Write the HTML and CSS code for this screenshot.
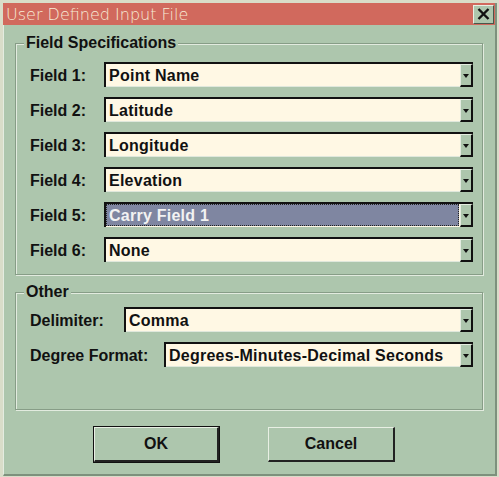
FILE: index.html
```html
<!DOCTYPE html>
<html lang="en">
<head>
<meta charset="UTF-8">
<title>User Defined Input File</title>
<link rel="stylesheet" href="styles.css">
</head>
<body>
<div class="window">
    <div class="titlebar">
        <span class="title">User Defined Input File</span>
        <span class="close">
            <svg width="13" height="12" viewBox="0 0 13 12"><path d="M1.5 1 L11.5 11 M11.5 1 L1.5 11" stroke="#111" stroke-width="2.4" fill="none"/></svg>
        </span>
    </div>
    <div class="content">
        <fieldset class="group group-fields">
            <legend>Field Specifications</legend>
            <div class="row">
                <span class="label">Field 1:</span>
                <div class="combo"><span class="value">Point Name</span><span class="drop"></span></div>
            </div>
            <div class="row">
                <span class="label">Field 2:</span>
                <div class="combo"><span class="value">Latitude</span><span class="drop"></span></div>
            </div>
            <div class="row">
                <span class="label">Field 3:</span>
                <div class="combo"><span class="value">Longitude</span><span class="drop"></span></div>
            </div>
            <div class="row">
                <span class="label">Field 4:</span>
                <div class="combo"><span class="value">Elevation</span><span class="drop"></span></div>
            </div>
            <div class="row">
                <span class="label">Field 5:</span>
                <div class="combo combo-selected"><span class="value">Carry Field 1</span><span class="drop"></span></div>
            </div>
            <div class="row">
                <span class="label">Field 6:</span>
                <div class="combo"><span class="value">None</span><span class="drop"></span></div>
            </div>
        </fieldset>
        <fieldset class="group group-other">
            <legend>Other</legend>
            <div class="row">
                <span class="label label-delim">Delimiter:</span>
                <div class="combo"><span class="value">Comma</span><span class="drop"></span></div>
            </div>
            <div class="row">
                <span class="label label-degree">Degree Format:</span>
                <div class="combo"><span class="value">Degrees-Minutes-Decimal Seconds</span><span class="drop"></span></div>
            </div>
        </fieldset>
        <div class="buttons">
            <button class="btn btn-default">OK</button>
            <button class="btn btn-cancel">Cancel</button>
        </div>
    </div>
</div>
</body>
</html>
```

FILE: styles.css
```css
body {
    margin: 0;
    padding: 3px 0 0 3px;
    background-color: #d9ddc9;
    font-family: "Liberation Sans", Arial, sans-serif;
    color: #111;
}

.window {
    width: 494px;
    height: 473px;
    box-sizing: border-box;
    background-color: #adc6ad;
    border-left: 1px solid #e4ece0;
    border-right: 2px solid #7d917d;
    border-bottom: 2px solid #7d917d;
}

.titlebar {
    display: flex;
    align-items: center;
    justify-content: space-between;
    height: 22px;
    background-color: #d1695d;
    margin-left: -1px;
}

.title {
    padding-left: 3px;
    font-family: "DejaVu Sans ExtraLight", "DejaVu Sans", sans-serif;
    font-weight: 200;
    font-size: 16px;
    color: #f7ecd6;
}

.close {
    display: flex;
    align-items: center;
    justify-content: center;
    width: 21px;
    height: 19px;
    box-sizing: border-box;
    margin-right: 1px;
    background-color: #adc6ad;
    border-top: 1px solid #e8efe4;
    border-left: 1px solid #e8efe4;
    border-right: 1px solid #4a564a;
    border-bottom: 1px solid #4a564a;
}

.content {
    padding-top: 10px;
}

/* group boxes */
.group {
    width: 468px;
    box-sizing: border-box;
    margin: 0 0 0 11px;
    padding: 0 9px 0 14px;
    border: 1px solid #879d87;
    box-shadow: inset 1px 1px 0 #e2ebdf, 1px 1px 0 #e2ebdf;
}

.group legend {
    margin-left: -6px;
    padding: 0 2px;
    background-color: #adc6ad;
    font-size: 16px;
    font-weight: bold;
    line-height: 16px;
}

.group-fields {
    padding-bottom: 12px;
}

.group-fields .row:first-of-type {
    margin-top: 11px;
}

.group-other {
    margin-top: 9px;
    padding-bottom: 42px;
}

.group-other .row:first-of-type {
    margin-top: 7px;
}

.row {
    display: flex;
    align-items: center;
    height: 25px;
    margin-bottom: 10px;
}

.row:last-child {
    margin-bottom: 0;
}

.label {
    width: 74px;
    flex-shrink: 0;
    font-size: 16px;
    font-weight: bold;
    padding-top: 2px;
}

.label-delim {
    width: 94px;
}

.label-degree {
    width: 134px;
}

/* combo boxes */
.combo {
    flex: 1;
    display: flex;
    min-width: 0;
    height: 25px;
    box-sizing: border-box;
    background-color: #fff8e4;
    border-top: 2px solid #111;
    border-left: 2px solid #111;
}

.value {
    flex: 1;
    display: flex;
    align-items: center;
    padding: 2px 0 0 3px;
    font-size: 16px;
    font-weight: bold;
    letter-spacing: 0.25px;
    white-space: nowrap;
    overflow: hidden;
    border-bottom: 1px solid #e0e8dc;
}

.drop {
    position: relative;
    width: 13px;
    flex-shrink: 0;
    box-sizing: border-box;
    background-color: #adc6ad;
    border-top: 1px solid #e4ece0;
    border-left: 1px solid #e4ece0;
    border-right: 2px solid #111;
    border-bottom: 2px solid #111;
}

.drop::after {
    content: "";
    position: absolute;
    left: 2px;
    top: 9px;
    border-left: 3px solid transparent;
    border-right: 3px solid transparent;
    border-top: 4px solid #111;
}

.combo-selected .value {
    background-color: #7f86a1;
    color: #f2f2f2;
    border: 1px dotted #222;
    margin: 0 1px 1px 0;
    padding-left: 2px;
}

/* buttons */
.buttons {
    display: flex;
    gap: 49px;
    margin: 17px 0 0 90px;
}

.btn {
    height: 35px;
    box-sizing: border-box;
    background-color: #adc6ad;
    font-family: "Liberation Sans", Arial, sans-serif;
    font-size: 16px;
    font-weight: bold;
    color: #111;
    border-top: 1px solid #e8efe4;
    border-left: 1px solid #e8efe4;
    border-right: 2px solid #222;
    border-bottom: 2px solid #222;
    padding: 0;
}

.btn-default {
    width: 125px;
    outline: 1px solid #111;
    outline-offset: 0;
}

.btn-cancel {
    width: 127px;
}
```
